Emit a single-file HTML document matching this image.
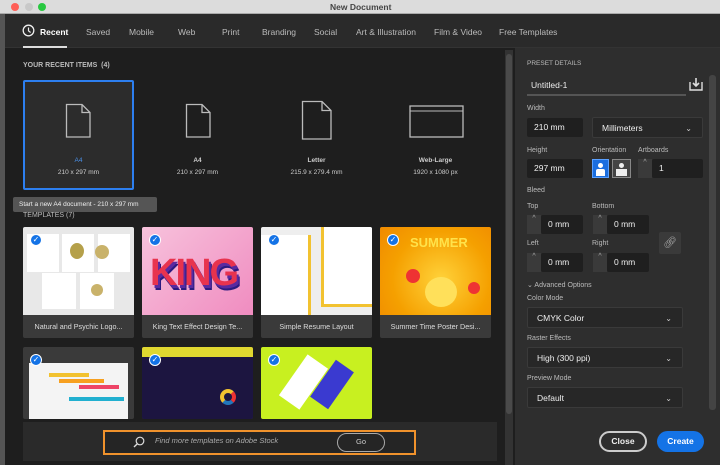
<!DOCTYPE html><html><head><style>
*{margin:0;padding:0;box-sizing:border-box}
body{width:720px;height:465px;overflow:hidden;background:#1e1e1e;font-family:"Liberation Sans",sans-serif;color:#ddd;position:relative;font-size:8px}
.a{position:absolute}
.tb{left:0;top:0;width:720px;height:14px;background:#dcdcdc;border-bottom:1px solid #aaa}
.dot{width:8px;height:8px;border-radius:50%;top:3px}
.tabs{left:5px;top:14px;width:715px;height:34px;background:#2a2a2a;border-bottom:1px solid #333}
.tab{top:27px;font-size:8.5px;color:#bbb}
.field{background:#1f1f1f;border-radius:2px;color:#eee;font-size:8.5px;padding-left:7px}
.lbl{color:#bbb;font-size:7px}
.sel{background:#272727;border:1px solid #3a3a3a;border-radius:2px;color:#eee;font-size:8.5px;padding-left:9px}
.chev{right:10px;color:#ccc;font-size:8px}
.card{background:#3a3a3a;width:111px;height:111px;border-radius:2px;overflow:hidden}
.card .img{position:absolute;left:0;top:0;width:111px;height:88px}
.card .t{position:absolute;left:0;top:88px;width:111px;height:23px;line-height:23px;text-align:center;font-size:7.2px;color:#ddd;white-space:nowrap}
.chk{position:absolute;left:7px;top:7px;width:12px;height:12px;border-radius:50%;background:#1473e6;border:1px solid #fff;color:#fff;font-size:8px;line-height:10px;text-align:center}
.ri{color:#ccc;text-align:center;font-size:6.5px}
.stp{width:14px;background:#3a3a3a;color:#aaa;font-size:7px;text-align:center}
</style></head><body>
<div class="a" style="left:0;top:0;width:5px;height:465px;background:#555"></div>
<div class="a tb"></div>
<div class="a dot" style="left:11px;background:#fe5f57"></div>
<div class="a dot" style="left:25px;background:#c8c8c8"></div>
<div class="a dot" style="left:38px;background:#28c840"></div>
<div class="a" style="left:330px;top:2px;font-size:8.5px;color:#444;font-weight:bold">New Document</div>
<div class="a tabs"></div>
<svg class="a" style="left:22px;top:24px" width="13" height="13" viewBox="0 0 13 13"><circle cx="6.5" cy="6.5" r="5.3" fill="none" stroke="#eee" stroke-width="1.3"/><path d="M6.5 3.5V6.8L8.6 8.5" fill="none" stroke="#eee" stroke-width="1.2"/></svg>
<div class="a tab" style="left:40px;color:#fff;font-weight:bold">Recent</div>
<div class="a" style="left:23px;top:46px;width:44px;height:2px;background:#ddd"></div>
<div class="a tab" style="left:86px">Saved</div>
<div class="a tab" style="left:129px">Mobile</div>
<div class="a tab" style="left:178px">Web</div>
<div class="a tab" style="left:222px">Print</div>
<div class="a tab" style="left:262px">Branding</div>
<div class="a tab" style="left:314px">Social</div>
<div class="a tab" style="left:356px">Art &amp; Illustration</div>
<div class="a tab" style="left:434px">Film &amp; Video</div>
<div class="a tab" style="left:499px">Free Templates</div>

<div class="a" style="left:23px;top:62px;font-size:7px;color:#bbb;font-weight:bold">YOUR RECENT ITEMS &nbsp;(4)</div>
<div class="a" style="left:23px;top:80px;width:111px;height:110px;border:2px solid #2d7ff0;background:#2c2c2c;border-radius:2px"></div>
<svg class="a" style="left:65px;top:103px" width="27" height="36"><path d="M1.5 1.5H17L25 9.5V34H1.5Z M17 1.5V9.5H25" fill="none" stroke="#bbb" stroke-width="1.3"/></svg>
<div class="a ri" style="left:23px;top:157px;width:111px;color:#4a8fe6">A4</div>
<div class="a ri" style="left:23px;top:169px;width:111px">210 x 297 mm</div>
<svg class="a" style="left:185px;top:103px" width="27" height="36"><path d="M1.5 1.5H17L25 9.5V34H1.5Z M17 1.5V9.5H25" fill="none" stroke="#bbb" stroke-width="1.3"/></svg>
<div class="a ri" style="left:142px;top:157px;width:111px;font-weight:bold">A4</div>
<div class="a ri" style="left:142px;top:169px;width:111px">210 x 297 mm</div>
<svg class="a" style="left:301px;top:100px" width="32" height="41"><path d="M1.5 1.5H21L30 10.5V39H1.5Z M21 1.5V10.5H30" fill="none" stroke="#bbb" stroke-width="1.3"/></svg>
<div class="a ri" style="left:261px;top:157px;width:111px;font-weight:bold">Letter</div>
<div class="a ri" style="left:261px;top:169px;width:111px">215.9 x 279.4 mm</div>
<svg class="a" style="left:409px;top:105px" width="56" height="33"><rect x="1" y="1" width="53" height="31" fill="none" stroke="#bbb" stroke-width="1.3"/><path d="M1 6H54" stroke="#bbb" stroke-width="1"/></svg>
<div class="a ri" style="left:380px;top:157px;width:111px;font-weight:bold">Web-Large</div>
<div class="a ri" style="left:380px;top:169px;width:111px">1920 x 1080 px</div>

<div class="a" style="left:23px;top:212px;font-size:7px;color:#bbb">TEMPLATES (7)</div>
<div class="a" style="left:13px;top:197px;width:144px;height:15px;background:#555;border-radius:2px;color:#eee;font-size:6.5px;line-height:15px;padding-left:6px">Start a new A4 document - 210 x 297 mm</div>

<div class="a card" style="left:23px;top:227px"><div class="img" style="background:#e8e8e8">
<div class="a" style="left:4px;top:7px;width:32px;height:38px;background:#fff"></div><div class="a" style="left:39px;top:7px;width:32px;height:38px;background:#fff"></div><div class="a" style="left:75px;top:7px;width:32px;height:38px;background:#fff"></div>
<div class="a" style="left:19px;top:46px;width:34px;height:36px;background:#fff"></div><div class="a" style="left:57px;top:46px;width:34px;height:36px;background:#fff"></div>
<div class="a" style="left:72px;top:18px;width:14px;height:14px;border-radius:50%;background:#c9b26a"></div><div class="a" style="left:47px;top:16px;width:14px;height:16px;border-radius:50%;background:#b5a04a"></div><div class="a" style="left:68px;top:57px;width:12px;height:12px;border-radius:50%;background:#c9b26a"></div></div>
<div class="chk">✓</div><div class="t">Natural and Psychic Logo...</div></div>
<div class="a card" style="left:142px;top:227px"><div class="img" style="background:linear-gradient(135deg,#f7c2dc,#f08cc0)"><div class="a" style="left:8px;top:25px;font-size:38px;font-weight:bold;color:#e8334e;letter-spacing:-2px;text-shadow:2px 3px 0 #5a2aa0,3px 5px 0 #2a1a80">KING</div></div>
<div class="chk">✓</div><div class="t">King Text Effect Design Te...</div></div>
<div class="a card" style="left:261px;top:227px"><div class="img" style="background:#eee"><div class="a" style="left:0;top:8px;width:50px;height:80px;background:#fff;border-right:3px solid #f2c230"></div><div class="a" style="left:60px;top:0;width:51px;height:80px;background:#fff;border:3px solid #f2c230;border-top:0;border-right:0"></div></div>
<div class="chk">✓</div><div class="t">Simple Resume Layout</div></div>
<div class="a card" style="left:380px;top:227px"><div class="img" style="background:radial-gradient(circle at 55% 60%,#ffd23a,#f5a000 60%,#f08a00)"><div class="a" style="left:30px;top:8px;color:#ffe24a;font-weight:bold;font-size:13px">SUMMER</div><div class="a" style="left:26px;top:42px;width:14px;height:14px;border-radius:50%;background:#e33"></div><div class="a" style="left:88px;top:55px;width:12px;height:12px;border-radius:50%;background:#e33"></div><div class="a" style="left:45px;top:50px;width:32px;height:30px;border-radius:50%;background:#ffe05a"></div></div>
<div class="chk">✓</div><div class="t">Summer Time Poster Desi...</div></div>

<div class="a card" style="left:23px;top:347px;height:72px"><div class="img" style="left:6px;top:16px;width:99px;height:56px;background:#f4f4f4"><div class="a" style="left:20px;top:10px;width:40px;height:4px;background:#f2c230"></div><div class="a" style="left:30px;top:16px;width:45px;height:4px;background:#f7a020"></div><div class="a" style="left:50px;top:22px;width:40px;height:4px;background:#ee4466"></div><div class="a" style="left:40px;top:34px;width:55px;height:4px;background:#22b0d0"></div></div><div class="chk">✓</div></div>
<div class="a card" style="left:142px;top:347px;height:72px"><div class="img" style="height:72px;background:#1c1540"><div class="a" style="left:0;top:0;width:111px;height:10px;background:#e0d830"></div><div class="a" style="left:78px;top:42px;width:16px;height:16px;border-radius:50%;border:4px solid #f2c230;border-right-color:#e33;border-bottom-color:#27b"></div></div><div class="chk">✓</div></div>
<div class="a card" style="left:261px;top:347px;height:72px"><div class="img" style="height:72px;background:#c8f020"><div class="a" style="left:30px;top:10px;width:25px;height:50px;background:#fff;transform:rotate(35deg)"></div><div class="a" style="left:60px;top:15px;width:22px;height:45px;background:#3a3ad0;transform:rotate(35deg)"></div></div><div class="chk">✓</div></div>

<div class="a" style="left:23px;top:422px;width:474px;height:39px;background:#2a2a2a"></div>
<div class="a" style="left:103px;top:430px;width:313px;height:25px;border:2px solid #f0922c;background:#252525"></div>
<svg class="a" style="left:133px;top:436px" width="12" height="12"><circle cx="7" cy="5" r="3.8" fill="none" stroke="#ddd" stroke-width="1.2"/><path d="M4.3 7.7L1 11" stroke="#ddd" stroke-width="1.4"/></svg>
<div class="a" style="left:155px;top:436px;font-style:italic;color:#aaa;font-size:7.5px">Find more templates on Adobe Stock</div>
<div class="a" style="left:337px;top:433px;width:48px;height:19px;border:1.5px solid #aaa;border-radius:10px;text-align:center;line-height:16px;color:#ccc;font-size:7.5px">Go</div>

<div class="a" style="left:505px;top:50px;width:8px;height:415px;background:#333"></div>
<div class="a" style="left:506px;top:54px;width:6px;height:360px;background:#4a4a4a;border-radius:3px"></div>

<div class="a" style="left:515px;top:48px;width:205px;height:417px;background:#2e2e2e"></div>
<div class="a" style="left:709px;top:75px;width:7px;height:335px;background:#444;border-radius:3px"></div>
<div class="a lbl" style="left:527px;top:60px;font-size:6.5px">PRESET DETAILS</div>
<div class="a" style="left:531px;top:80px;font-size:8.5px;color:#eee">Untitled-1</div>
<div class="a" style="left:527px;top:94px;width:159px;height:2px;background:#555"></div>
<svg class="a" style="left:688px;top:76px" width="16" height="16"><path d="M2 6V14H14V6" fill="none" stroke="#ddd" stroke-width="1.4"/><path d="M8 2V10M5 7L8 10L11 7" fill="none" stroke="#ddd" stroke-width="1.6"/></svg>
<div class="a lbl" style="left:527px;top:105px">Width</div>
<div class="a field" style="left:527px;top:118px;width:56px;height:19px;line-height:19px">210 mm</div>
<div class="a sel" style="left:592px;top:117px;width:111px;height:21px;line-height:21px">Millimeters<span class="a chev">⌄</span></div>
<div class="a lbl" style="left:527px;top:147px">Height</div>
<div class="a lbl" style="left:592px;top:147px">Orientation</div>
<div class="a lbl" style="left:638px;top:147px">Artboards</div>
<div class="a field" style="left:527px;top:159px;width:56px;height:19px;line-height:19px">297 mm</div>
<div class="a" style="left:592px;top:159px;width:17px;height:19px;background:#1a6ee0;border:1px solid #5aa0ff"><div class="a" style="left:5px;top:3px;width:5px;height:5px;border-radius:50%;background:#fff"></div><div class="a" style="left:3px;top:9px;width:9px;height:7px;background:#fff;border-radius:2px 2px 0 0"></div></div>
<div class="a" style="left:612px;top:159px;width:19px;height:19px;border:1px solid #888;background:#444"><div class="a" style="left:6px;top:3px;width:5px;height:5px;border-radius:50%;background:#eee"></div><div class="a" style="left:3px;top:9px;width:11px;height:7px;background:#eee"></div></div>
<div class="a stp" style="left:638px;top:159px;height:19px">^</div>
<div class="a field" style="left:652px;top:159px;width:51px;height:19px;line-height:19px">1</div>
<div class="a lbl" style="left:527px;top:187px">Bleed</div>
<div class="a lbl" style="left:527px;top:203px">Top</div><div class="a lbl" style="left:592px;top:203px">Bottom</div>
<div class="a stp" style="left:527px;top:215px;height:19px">^</div><div class="a field" style="left:541px;top:215px;width:42px;height:19px;line-height:19px">0 mm</div>
<div class="a stp" style="left:593px;top:215px;height:19px">^</div><div class="a field" style="left:607px;top:215px;width:42px;height:19px;line-height:19px">0 mm</div>
<div class="a" style="left:659px;top:232px;width:22px;height:22px;background:#3a3a3a;border-radius:2px;color:#aaa;font-size:11px;text-align:center;line-height:22px">🔗︎</div>
<div class="a lbl" style="left:527px;top:240px">Left</div><div class="a lbl" style="left:592px;top:240px">Right</div>
<div class="a stp" style="left:527px;top:253px;height:19px">^</div><div class="a field" style="left:541px;top:253px;width:42px;height:19px;line-height:19px">0 mm</div>
<div class="a stp" style="left:593px;top:253px;height:19px">^</div><div class="a field" style="left:607px;top:253px;width:42px;height:19px;line-height:19px">0 mm</div>
<div class="a lbl" style="left:527px;top:281px">⌄ Advanced Options</div>
<div class="a lbl" style="left:527px;top:295px">Color Mode</div>
<div class="a sel" style="left:527px;top:307px;width:156px;height:21px;line-height:21px">CMYK Color<span class="a chev">⌄</span></div>
<div class="a lbl" style="left:527px;top:335px">Raster Effects</div>
<div class="a sel" style="left:527px;top:347px;width:156px;height:21px;line-height:21px">High (300 ppi)<span class="a chev">⌄</span></div>
<div class="a lbl" style="left:527px;top:375px">Preview Mode</div>
<div class="a sel" style="left:527px;top:387px;width:156px;height:21px;line-height:21px">Default<span class="a chev">⌄</span></div>
<div class="a" style="left:599px;top:431px;width:48px;height:21px;border:2px solid #ccc;border-radius:11px;text-align:center;line-height:17px;color:#eee;font-size:8.5px;font-weight:bold">Close</div>
<div class="a" style="left:657px;top:431px;width:47px;height:21px;background:#1473e6;border-radius:11px;text-align:center;line-height:21px;color:#fff;font-size:8.5px;font-weight:bold">Create</div>
</body></html>
